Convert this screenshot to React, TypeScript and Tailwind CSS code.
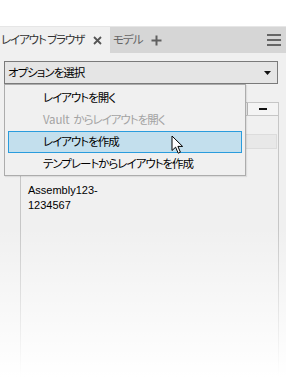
import React from "react";

function Cursor() {
  return (
    <svg
      width="13"
      height="20"
      viewBox="0 0 13 20"
      className="absolute left-[171px] top-[135px]"
    >
      <path
        d="M1 1 L1 15.5 L4.6 12.2 L7.2 18.2 L9.4 17.2 L6.9 11.4 L11.6 11.4 Z"
        fill="#fff"
        stroke="#000"
        strokeWidth="1"
        strokeLinejoin="miter"
      />
    </svg>
  );
}

function App() {
  const jp = "font-['Noto_Sans_CJK_JP','Noto_Sans',sans-serif] [font-feature-settings:'palt']";
  return (
    <div className={"relative w-[286px] h-[377px] overflow-hidden bg-white " + jp}>
      <div className="h-[27px] bg-white border-b border-[#e6e6e6]" />

      {/* tabs */}
      <div className="flex h-[26px] items-center bg-[#d6d6d6] whitespace-nowrap">
        <div className="flex h-full w-[110px] items-center bg-[#f0f0f0] pl-[1px] text-[11.5px] text-[#333]">
          <span className="tracking-[-1.1px]">レイアウト ブラウザ</span>
          <svg width="9" height="9" viewBox="0 0 9 9" className="ml-auto mr-[8px]">
            <path d="M1 1 L8 8 M8 1 L1 8" stroke="#555" strokeWidth="1.8" />
          </svg>
        </div>
        <span className="ml-[3px] text-[11.5px] text-[#666] tracking-[-1px]">モデル</span>
        <svg width="11" height="11" viewBox="0 0 11 11" className="ml-[9px]">
          <path d="M5.5 0.5 V10.5 M0.5 5.5 H10.5" stroke="#606060" strokeWidth="2" />
        </svg>
        <div className="ml-auto mr-[5px] flex w-[14px] flex-col gap-[3px]">
          <div className="h-[2px] bg-[#666]" />
          <div className="h-[2px] bg-[#666]" />
          <div className="h-[2px] bg-[#666]" />
        </div>
      </div>

      {/* body */}
      <div className="h-[324px] bg-[#f0f0f0] pl-[4px] pr-[8px] pt-[8px]">
        <div className="flex h-[23px] items-center border border-[#7a7a7a] bg-[#e5e5e5] pl-[3px] pr-[6px] text-[11.5px] tracking-[-1px] text-black">
          <span>オプションを選択</span>
          <svg width="7" height="4" viewBox="0 0 7 4" className="ml-auto">
            <path d="M0 0 H7 L3.5 4 Z" fill="#111" />
          </svg>
        </div>

        <div className="ml-[16px] mr-[-1px] mt-[18px] h-[280px] border-x border-[#c6c6c6]">
          <div className="flex h-[14px] border-y border-[#c6c6c6] bg-[#f0f0f0]">
            <div className="ml-auto flex w-[31px] items-center justify-center border-l border-[#b4b4b4] bg-[#f4f4f4]">
              <div className="h-[2px] w-[8px] bg-[#111]" />
            </div>
          </div>
          <div className="mr-[1px] mt-[18px] h-[15px] border border-[#dcdcdc] bg-[#e8e8e8]" />
          <div className="pl-[7px] pt-[34px] font-['Liberation_Sans',sans-serif] text-[11px] leading-[15px] text-black">
            <div>Assembly123-</div>
            <div>1234567</div>
          </div>
        </div>
      </div>

      {/* dropdown menu */}
      <div className="absolute left-[4px] top-[84px] flex h-[92px] w-[242px] flex-col border border-[#acacac] bg-[#f0f0f0] px-[3px] pt-[2px] text-[11.5px] tracking-[-1px] whitespace-nowrap shadow-[1px_1px_1px_rgba(0,0,0,0.08)]">
        <div className="flex h-[22px] items-center pl-[35px] text-black">レイアウトを開く</div>
        <div className="flex h-[22px] items-center pl-[35px] text-[#a3a3a3]">
          <span className="mr-[4px] tracking-[-0.2px]">Vault</span>
          <span>からレイアウトを開く</span>
        </div>
        <div className="flex h-[22px] items-center border border-[#2a9cdd] bg-[#c3dfed] pl-[34px] text-black">
          レイアウトを作成
        </div>
        <div className="flex h-[22px] items-center pl-[35px] text-black">テンプレートからレイアウトを作成</div>
      </div>

      <Cursor />

      {/* bottom fade */}
      <div className="pointer-events-none absolute bottom-0 left-0 h-[150px] w-full bg-gradient-to-b from-white/0 via-white/50 to-white" />
    </div>
  );
}

export default App;
